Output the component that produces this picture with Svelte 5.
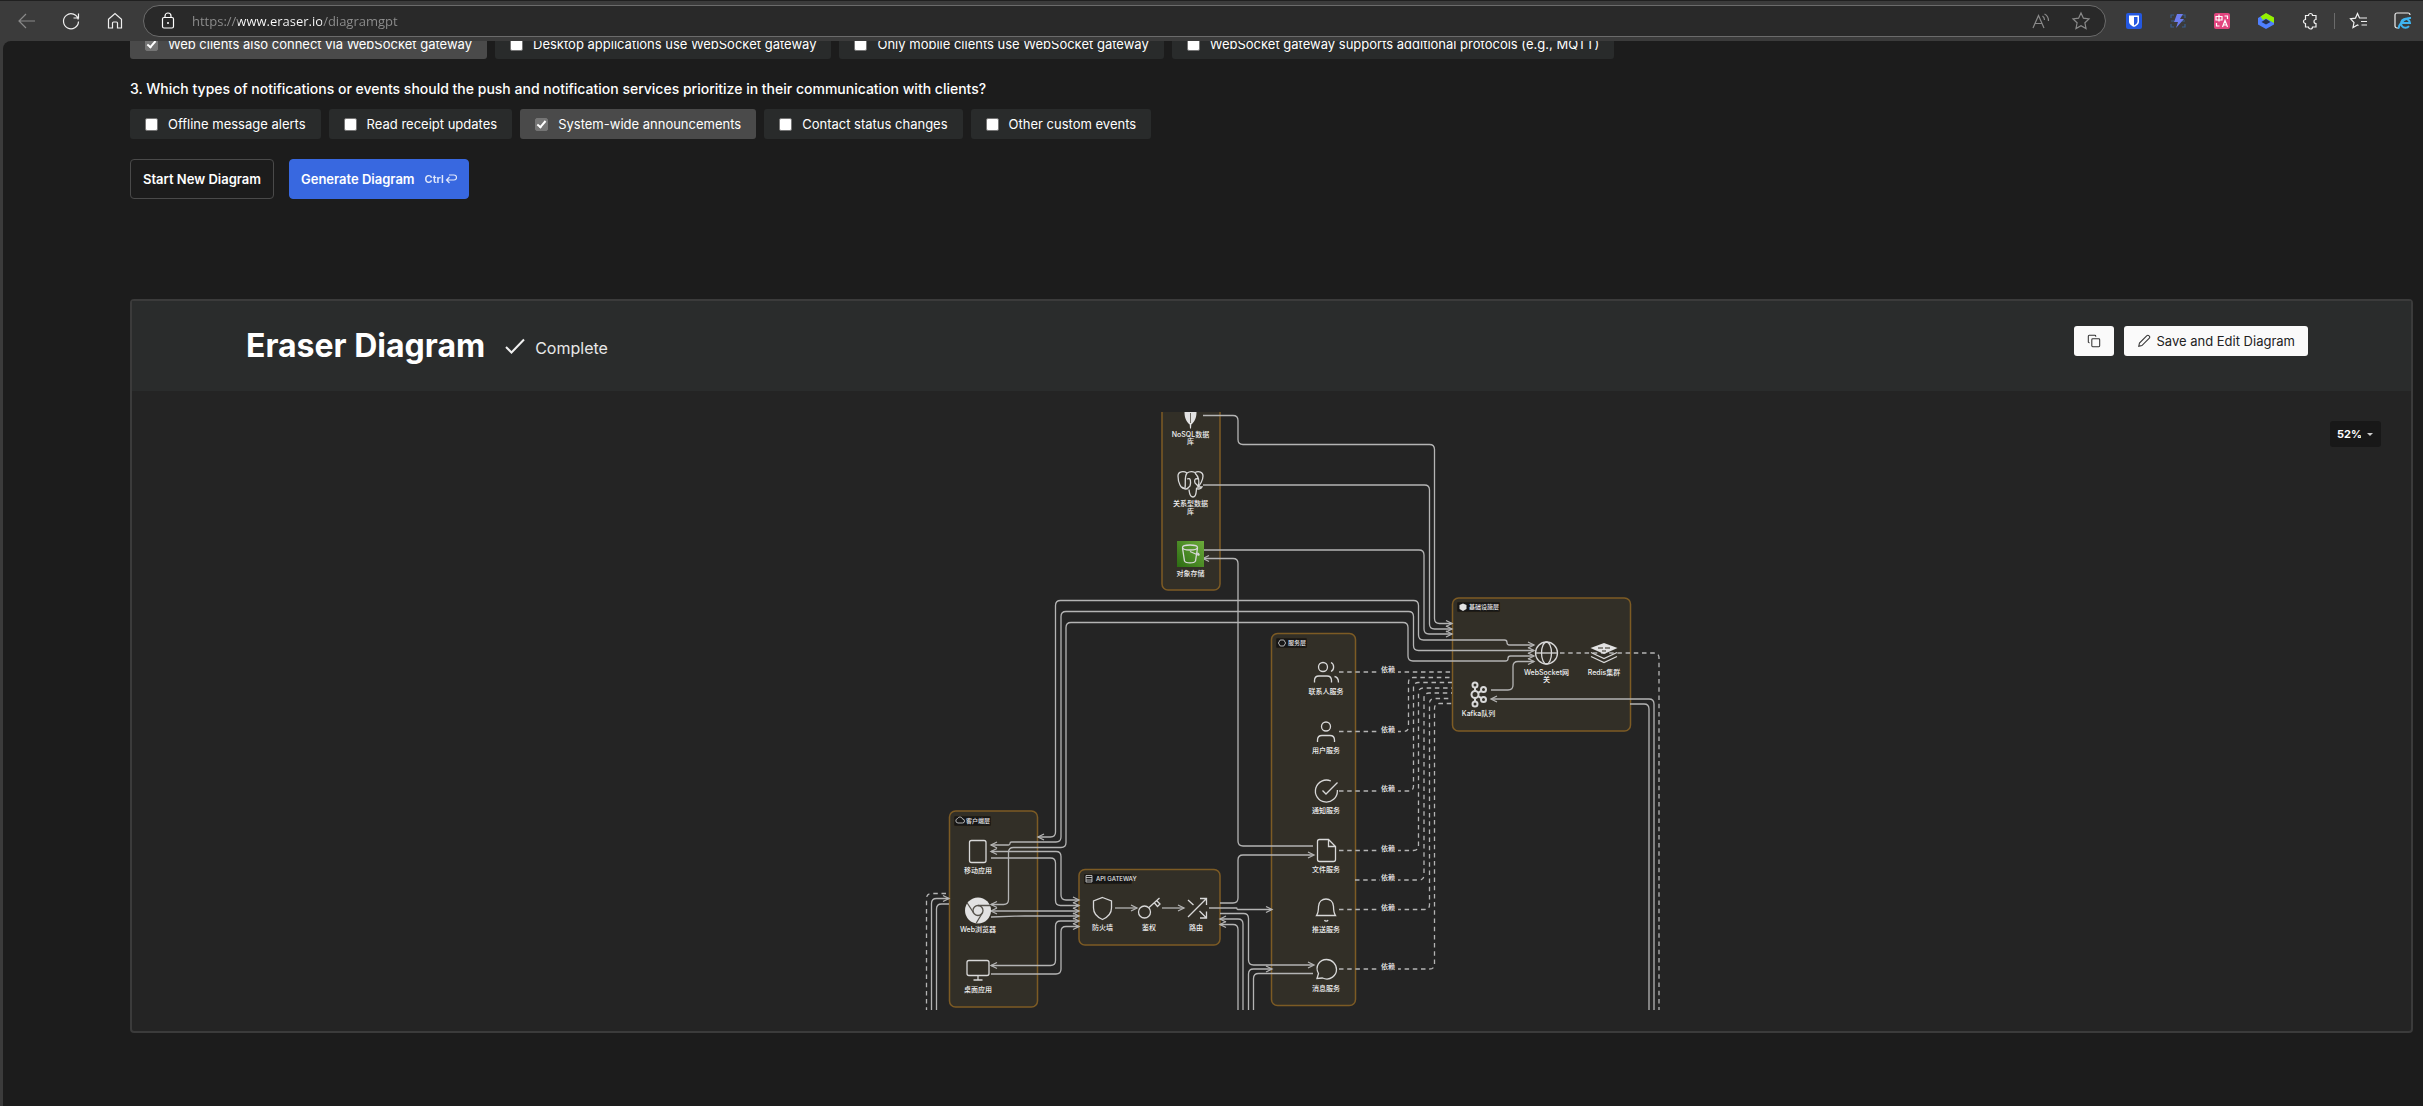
<script lang="ts">
	type Chip = { label: string; checked: boolean };

	let gatewayOptions = $state<Chip[]>([
		{ label: 'Web clients also connect via WebSocket gateway', checked: true },
		{ label: 'Desktop applications use WebSocket gateway', checked: false },
		{ label: 'Only mobile clients use WebSocket gateway', checked: false },
		{ label: 'WebSocket gateway supports additional protocols (e.g., MQTT)', checked: false }
	]);

	let eventOptions = $state<Chip[]>([
		{ label: 'Offline message alerts', checked: false },
		{ label: 'Read receipt updates', checked: false },
		{ label: 'System-wide announcements', checked: true },
		{ label: 'Contact status changes', checked: false },
		{ label: 'Other custom events', checked: false }
	]);

	let url = $state('https://www.eraser.io/diagramgpt');
	let zoom = $state('52%');

	const groups = [
		{ x: 1162, y: 380, w: 58, h: 210 },
		{ x: 1452.5, y: 598, w: 178, h: 133 },
		{ x: 1271.5, y: 633.5, w: 84, h: 372 },
		{ x: 949.5, y: 811, w: 88, h: 196 },
		{ x: 1079, y: 869.5, w: 141, h: 75.5 }
	];

	const tags = [
		{ x: 1457, y: 602, w: 43, text: '基础设施层' },
		{ x: 1276, y: 638, w: 31, text: '服务层' },
		{ x: 954, y: 816, w: 37, text: '客户端层' },
		{ x: 1084, y: 874, w: 48, text: 'API GATEWAY' }
	];

	// each edge is a list of corner points, drawn with rounded bends
	const edges = [
		[1203, 415.5, 1238, 415.5, 1238, 444.5, 1434.5, 444.5, 1434.5, 623.5, 1452, 623.5],
		[1203, 485, 1429.5, 485, 1429.5, 629, 1452, 629],
		[1203, 550, 1424, 550, 1424, 634, 1452, 634],
		[1313, 846, 1238, 846, 1238, 558.5, 1203, 558.5],
		[1038, 837, 1055.5, 837, 1055.5, 600.5, 1418.5, 600.5, 1418.5, 640, 1507, 640, 1507, 645, 1534, 645],
		[991, 845, 1010, 845, 1010, 842, 1061, 842, 1061, 611.5, 1413.5, 611.5, 1413.5, 650.5, 1534, 650.5],
		[991, 904.5, 1008.5, 904.5, 1008.5, 847.5, 1066, 847.5, 1066, 622.5, 1408, 622.5, 1408, 661, 1508, 661, 1508, 656, 1534, 656],
		[1491, 690, 1513, 690, 1513, 661.5, 1534, 661.5],
		[1492, 699, 1654, 699, 1654, 1012],
		[1630, 704, 1649, 704, 1649, 1012],
		[991, 851.5, 1061, 851.5, 1061, 900, 1079, 900],
		[991, 858, 1055.5, 858, 1055.5, 905.5, 1079, 905.5],
		[991, 911, 1079, 911],
		[991, 917, 1020, 916, 1079, 916],
		[991, 965.5, 1055.5, 965.5, 1055.5, 921, 1079, 921],
		[991, 974, 1061, 974, 1061, 926.5, 1079, 926.5],
		[1115, 908, 1137, 908],
		[1162, 908, 1184, 908],
		[1209, 908, 1237, 908, 1237, 909.5, 1271, 909.5],
		[1220, 903, 1238, 903, 1238, 855, 1313, 855],
		[1220, 913.5, 1248.5, 913.5, 1248.5, 965, 1313, 965],
		[1220, 919, 1243, 919, 1243, 1012],
		[1220, 924.5, 1238, 924.5, 1238, 1012],
		[1271, 969, 1248.5, 969, 1248.5, 1012],
		[1313, 973.5, 1253.5, 973.5, 1253.5, 1012],
		[949, 898.5, 931.5, 898.5, 931.5, 1012],
		[949, 904, 936.5, 904, 936.5, 1012]
	];

	const dashed = [
		[1339, 672, 1452, 672],
		[1339, 731.5, 1408.5, 731.5, 1408.5, 677.5, 1452, 677.5],
		[1339, 791, 1413.5, 791, 1413.5, 682.5, 1452, 682.5],
		[1339, 850.5, 1418.5, 850.5, 1418.5, 688, 1452, 688],
		[1355, 880, 1424, 880, 1424, 693, 1452, 693],
		[1339, 909.5, 1429.5, 909.5, 1429.5, 698.5, 1452, 698.5],
		[1339, 969, 1434.5, 969, 1434.5, 703.5, 1452, 703.5],
		[1560, 653, 1659, 653, 1659, 1012],
		[946, 893.5, 926.5, 893.5, 926.5, 1012]
	];

	const headsRight = [
		[1452, 623.5], [1452, 629], [1452, 634],
		[1534, 645], [1534, 650.5], [1534, 656], [1534, 661.5],
		[1079, 900], [1079, 905.5], [1079, 911], [1079, 916], [1079, 921], [1079, 926.5],
		[1137, 908], [1184, 908], [1272, 909.5], [1314, 855], [1314, 965], [1272, 969], [949, 898.5]
	];

	const headsLeft = [
		[1203, 558.5], [1038, 837], [991, 845], [991, 851.5], [991, 904.5],
		[991, 911], [991, 965.5], [1491, 699], [1220, 919], [1220, 924.5]
	];

	const labels = [
		{ x: 1190.5, y: 437, text: 'NoSQL数据' },
		{ x: 1190.5, y: 444, text: '库' },
		{ x: 1190.5, y: 506, text: '关系型数据' },
		{ x: 1190.5, y: 514, text: '库' },
		{ x: 1190.5, y: 576, text: '对象存储' },
		{ x: 1546.5, y: 675, text: 'WebSocket网' },
		{ x: 1546.5, y: 682, text: '关' },
		{ x: 1604, y: 675, text: 'Redis集群' },
		{ x: 1478.5, y: 716, text: 'Kafka队列' },
		{ x: 1326, y: 694, text: '联系人服务' },
		{ x: 1326, y: 753, text: '用户服务' },
		{ x: 1326, y: 813, text: '通知服务' },
		{ x: 1326, y: 872, text: '文件服务' },
		{ x: 1326, y: 932, text: '推送服务' },
		{ x: 1326, y: 991, text: '消息服务' },
		{ x: 978, y: 873, text: '移动应用' },
		{ x: 978, y: 932, text: 'Web浏览器' },
		{ x: 978, y: 992, text: '桌面应用' },
		{ x: 1102.5, y: 930, text: '防火墙' },
		{ x: 1149, y: 930, text: '鉴权' },
		{ x: 1196, y: 930, text: '路由' }
	];

	const dependsY = [672, 731.5, 791, 850.5, 880, 909.5, 969];

	function route(p: number[]) {
		let d = `M${p[0]} ${p[1]}`;
		for (let i = 2; i < p.length - 2; i += 2) {
			const dx0 = p[i] - p[i - 2];
			const dy0 = p[i + 1] - p[i - 1];
			const dx1 = p[i + 2] - p[i];
			const dy1 = p[i + 3] - p[i + 1];
			const l0 = Math.hypot(dx0, dy0);
			const l1 = Math.hypot(dx1, dy1);
			const r = Math.min(5, l0 / 2, l1 / 2);
			d += `L${p[i] - (dx0 / l0) * r} ${p[i + 1] - (dy0 / l0) * r}`;
			d += `Q${p[i]} ${p[i + 1]} ${p[i] + (dx1 / l1) * r} ${p[i + 1] + (dy1 / l1) * r}`;
		}
		return d + `L${p[p.length - 2]} ${p[p.length - 1]}`;
	}
</script>

{#snippet chips(options: Chip[])}
	<div class="chips">
		{#each options as option}
			<label class="chip" class:selected={option.checked}>
				<input type="checkbox" bind:checked={option.checked} />
				<span>{option.label}</span>
			</label>
		{/each}
	</div>
{/snippet}

<div class="browser">
	<header class="toolbar">
		<button class="tool dim" aria-label="Back">
			<svg viewBox="0 0 20 20"><path d="M18 10H2.500M9 3L2 10l7 7" /></svg>
		</button>
		<button class="tool" aria-label="Refresh">
			<svg viewBox="0 0 20 20"><path d="M17.300 8.500A7.500 7.500 0 1 0 17.500 10.500M17.500 2.500V7H12.500" /></svg>
		</button>
		<button class="tool" aria-label="Home">
			<svg viewBox="0 0 20 20"><path d="M3.500 8.300L10 2.500l6.500 5.800V17H12.500V12a1 1 0 0 0-1-1h-3a1 1 0 0 0-1 1v5H3.500z" /></svg>
		</button>
		<div class="address">
			<svg class="lock" viewBox="0 0 20 20">
				<rect x="4.500" y="6.500" width="11" height="10.500" rx="1.500" />
				<path d="M7 6.500V5a3 3 0 0 1 6 0v1.500" />
				<circle class="solid" cx="10" cy="12" r="1" />
			</svg>
			<input class="url" type="text" aria-label="Address" bind:value={url} />
			<button class="tool dim" aria-label="Read aloud">
				<svg viewBox="0 0 20 20"><path d="M2 17L7.500 4.500L13 17M4 12.500h7M11.500 5q2 1.500 2 4M13.500 3q4 2 4 7" /></svg>
			</button>
			<button class="tool dim" aria-label="Favorite this page">
				<svg viewBox="0 0 20 20"><path d="M10 2l2.400 5.200 5.600.700-4.100 3.900 1.100 5.700-5-2.800-5 2.800 1.100-5.700L2 7.900l5.600-.7z" /></svg>
			</button>
		</div>
		<div class="extensions">
			<button class="tool" aria-label="Password manager">
				<svg viewBox="0 0 20 20">
					<rect x="2" y="2" width="16" height="16" rx="2" fill="#2458e0" stroke="none" />
					<path d="M5 4.500h10v6c0 3-3 4.500-5 5.500-2-1-5-2.500-5-5.500z" fill="#fff" stroke="none" />
					<path d="M10 6h3.500v4.500c0 2-2 3-3.500 4z" fill="#2458e0" stroke="none" />
				</svg>
			</button>
			<button class="tool" aria-label="Page capture">
				<svg viewBox="0 0 20 20">
					<path d="M3 7V4h3M14 4h3v3M3 13v3h3M14 16h3v-3M3 10h3M14 10h3" stroke="#3a5f8f" />
					<path d="M9 3h6l-3 5h4l-8 9 2-6H6z" fill="#6c7cf0" stroke="none" />
				</svg>
			</button>
			<button class="tool" aria-label="Translate">
				<svg viewBox="0 0 20 20">
					<rect x="2" y="2" width="16" height="16" rx="2" fill="#e2457f" stroke="none" />
					<path d="M4 5.500h6v3.500H4zM7 3.500v7M12.500 5h3v3M4.500 12v3h3M10.500 16l2.500-6.500 2.500 6.500M11.500 14h3" stroke="#fff" />
				</svg>
			</button>
			<button class="tool" aria-label="Layers">
				<svg viewBox="0 0 20 20">
					<path d="M2 7l8-4.500L18 7v6.500L10 18l-8-4.500z" fill="#4f80ff" stroke="none" />
					<path d="M4.500 5.500L10 2l8 4.500V12l-8-4.500-3 1.500z" fill="#94f000" stroke="none" />
					<path d="M5.500 11L10 8l4.500 3-4.500 2.500z" fill="#26324f" stroke="none" />
				</svg>
			</button>
			<button class="tool" aria-label="Extensions">
				<svg viewBox="0 0 20 20"><path d="M5.500 4.500h3a2 2 0 0 1 4 0H16v4a2 2 0 0 0 0 4V16h-3.500a2 2 0 0 1-4 0h-3v-3.500a2 2 0 0 1 0-4z" /></svg>
			</button>
			<span class="divider"></span>
			<button class="tool" aria-label="Favorites">
				<svg viewBox="0 0 20 20"><path d="M9.500 14.500L8.500 14l-4.500 2.500 1-5L1.500 7.800l5-.7L8.500 2.500l2 4.500H18M12 10.500h6M12.500 14H18" /></svg>
			</button>
			<button class="tool" aria-label="Internet Explorer mode">
				<svg viewBox="0 0 20 20">
					<path d="M6 17H4a2 2 0 0 1-2-2V4a2 2 0 0 1 2-2h11a2 2 0 0 1 2 2" />
					<path d="M7.500 12h9.500a4.500 4.500 0 1 0-1 3.200M6 17.500c-1-3 5-11 12-10.500" stroke="#3fb4f0" stroke-width="2" />
				</svg>
			</button>
		</div>
	</header>

	<main class="page">
		<section class="questions">
			{@render chips(gatewayOptions)}
			<h2>3. Which types of notifications or events should the push and notification services prioritize in their communication with clients?</h2>
			{@render chips(eventOptions)}
			<div class="actions">
				<button class="btn">Start New Diagram</button>
				<button class="btn primary">
					Generate Diagram
					<span class="shortcut">
						Ctrl
						<svg viewBox="0 0 12 10"><path d="M4 1H9a2.500 2.500 0 0 1 0 5H1.500M4.500 3L1.500 6l3 3" /></svg>
					</span>
				</button>
			</div>
		</section>

		<section class="panel">
			<div class="panel-head">
				<h1>Eraser Diagram</h1>
				<svg class="tick" viewBox="0 0 20 16"><path d="M1 9l5.500 5.500L19 1.500" /></svg>
				<span class="status">Complete</span>
				<button class="light copy" aria-label="Copy">
					<svg viewBox="0 0 16 16"><rect x="5.500" y="5.500" width="9" height="9" rx="1" /><path d="M3 10H2.500a1 1 0 0 1-1-1V2.500a1 1 0 0 1 1-1H9a1 1 0 0 1 1 1V3" /></svg>
				</button>
				<button class="light save">
					<svg viewBox="0 0 16 16"><path d="M2 14l.8-3.600L11.300 1.900a1.500 1.500 0 0 1 2.200 0l.6.6a1.500 1.500 0 0 1 0 2.200L5.600 13.200z" /></svg>
					Save and Edit Diagram
				</button>
			</div>

			<div class="canvas">
				<svg class="diagram" viewBox="132 412 2279 598" role="img" aria-label="Architecture diagram">
					{#each groups as g}
						<rect class="group" x={g.x} y={g.y} width={g.w} height={g.h} rx="6" />
					{/each}

					{#each edges as e}
						<path class="edge" d={route(e)} />
					{/each}
					{#each dashed as e}
						<path class="edge dash" d={route(e)} />
					{/each}
					{#each headsRight as [x, y]}
						<path class="edge" d="M{x - 6} {y - 3}L{x} {y}L{x - 6} {y + 3}" />
					{/each}
					{#each headsLeft as [x, y]}
						<path class="edge" d="M{x + 6} {y - 3}L{x} {y}L{x + 6} {y + 3}" />
					{/each}

					{#each tags as t}
						<rect class="tag" x={t.x} y={t.y} width={t.w} height="10" rx="1" />
						<text class="tag-text" x={t.x + 12} y={t.y + 7}>{t.text}</text>
					{/each}

					{#each dependsY as y}
						<rect class="gap" x="1380" y={y - 5} width="18" height="8" />
						<text class="label" x="1388" y={y}>依赖</text>
					{/each}

					{#each labels as l}
						<text class="label" x={l.x} y={l.y}>{l.text}</text>
					{/each}

					<!-- tag icons -->
					<g class="icon thin">
						<path class="solid" d="M1459.500 605l3.500-1.500 3.500 1.500v4l-3.500 2-3.500-2z" />
						<path d="M1280.200 640h3.600l1.800 3-1.800 3h-3.600l-1.800-3z" />
						<path d="M957.500 818.500a2.300 2.300 0 0 0 .5 4.500h4.500a2 2 0 0 0 0-4c-.5-2.500-4-2.500-5-.5z" />
						<path d="M1086 875.500h6v6.500h-6zM1086 877.500h6M1086 880h6" />
					</g>

					<!-- MongoDB -->
					<path class="solid" d="M1184.500 412h12c0 6-2 10-5.200 12.500l-.3 4h-1l-.3-4c-3.200-2.500-5.200-6.500-5.200-12.500z" />
					<path class="seam" d="M1190.500 413v10" />

					<!-- PostgreSQL -->
					<g class="icon">
						<path d="M1185 488c-4 2-7-6-7-12 0-5 6-5 9-3 3-2 6-1.500 8-.5 4-2 8 0 8 3.500 0 4-3 9-5 11h4c-1 2-4 2.500-5.500 1.500-.5 4 0 8.500-3.500 8.500-3.500 0-3.500-4-4-7.500" />
						<path d="M1187 473c-3 4-1 10-2 15M1187 479c4-2 4 3 3 7l-3 3M1195 473c4 4 5 8 3 14M1198 479c-3-1-4 1-3 4l3 3" />
						<path d="M1182 487c3 3 5 2 6 1" />
					</g>

					<!-- S3 -->
					<defs>
						<linearGradient id="bucket" x1="0" y1="1" x2="1" y2="0">
							<stop offset="0" stop-color="#2c6c12" />
							<stop offset="1" stop-color="#6cab3a" />
						</linearGradient>
					</defs>
					<rect x="1177" y="541" width="27" height="26" fill="url(#bucket)" />
					<g class="icon">
						<ellipse cx="1190" cy="547.500" rx="7.500" ry="2.500" />
						<path d="M1182.500 548l2 13c1.500 2.500 9.500 2.500 11 0l2-13" />
						<path d="M1190 551.500l8 3.500c2 .500 1-1.500-.8-2" />
					</g>

					<!-- globe -->
					<g class="icon">
						<circle cx="1546.500" cy="653" r="11" />
						<ellipse cx="1546.500" cy="653" rx="5" ry="11" />
						<path d="M1535.500 653h22" />
					</g>

					<!-- Redis -->
					<g class="icon">
						<path class="solid" d="M1590.500 648l13.500-5 13.500 5-13.500 6z" />
						<path d="M1591 652.500l13 6 13-6M1591 656.500l13 6 13-6" />
						<path class="seam" d="M1598 648h5M1605 648h5M1602 651h4" />
					</g>

					<!-- Kafka -->
					<g class="icon heavy">
						<circle cx="1475" cy="685" r="2.500" />
						<circle cx="1475" cy="694.500" r="3.500" />
						<circle cx="1475" cy="704" r="2.500" />
						<circle cx="1483.500" cy="689.500" r="2.500" />
						<circle cx="1483.500" cy="699.500" r="2.500" />
						<path d="M1475 688v3M1475 698v3M1478.200 692.800l3-2M1478.200 696.200l3 2" />
					</g>

					<!-- services -->
					<g class="icon">
						<circle cx="1323" cy="667" r="4.500" />
						<path d="M1314.500 682.500v-2c0-3 2-4.500 4.500-4.500h8c2.500 0 4.500 1.500 4.500 4.500v2M1331 662.500c3.500 1.500 3.500 7.500 0 9M1334.500 676.500c2.500.5 4 2 4 6" />
						<circle cx="1326" cy="726.500" r="4.500" />
						<path d="M1317.500 742v-2c0-3 2-4.500 4.500-4.500h8c2.500 0 4.500 1.500 4.500 4.500v2" />
						<path d="M1337.400 790v1a11 11 0 1 1-6.500-10M1337.500 782.500l-11.500 11.500-3.500-3.500" />
						<path d="M1328.500 839.500h-9a2 2 0 0 0-2 2v18a2 2 0 0 0 2 2h14a2 2 0 0 0 2-2v-13zl0 7h7" />
						<path d="M1316.500 915.500c2-3 2-5 2-9 0-10 15-10 15 0 0 4 0 6 2 9zM1324.500 920c.5 1.500 3 1.500 3.500 0" />
						<path d="M1317 978.500l1.500-5c-4-7 1-14 8-14 5.500 0 10 4.500 10 10s-6 12-14 8.500z" />
					</g>

					<!-- clients -->
					<g class="icon">
						<rect x="969.500" y="840.500" width="16.500" height="22" rx="2" />
						<rect x="967" y="960.500" width="22" height="15" rx="2" />
						<path d="M978 975.500v4.500M973.500 980h9" />
					</g>
					<circle class="solid" cx="978" cy="910.500" r="13" />
					<circle class="chrome" cx="978" cy="910.500" r="5" />
					<path class="chrome" d="M978 905.500h12M973.700 913l-6.500-10M982.300 913l-6 10" />

					<!-- gateway -->
					<g class="icon">
						<path d="M1102.500 897.500l9 3.500v7c0 6-4.500 9.500-9 11.500-4.500-2-9-5.500-9-11.500v-7z" />
						<circle cx="1144.500" cy="912" r="6" />
						<path d="M1149 907.500l10.500-9.500M1154.500 903l3 3.500 2.500-2.500-3-3" />
						<path d="M1188 917l18-18M1200 898.500h6.500v6.500M1188 900l5.500 5M1199.500 911l6.500 6.500M1200 918h6.500v-6.500" />
					</g>
				</svg>

				<label class="zoom">
					<select aria-label="Zoom level" bind:value={zoom}>
						<option>52%</option>
						<option>100%</option>
					</select>
					<svg viewBox="0 0 8 5"><path d="M1 1h6L4 4z" /></svg>
				</label>
			</div>
		</section>
	</main>
</div>

<style>
	:global(body) {
		background: #3b3b3b;
	}

	.browser {
		min-height: 100vh;
		display: flex;
		flex-direction: column;
		overflow: hidden;
		font-family: Inter, 'Noto Sans CJK SC', sans-serif;
		font-size: 13px;
		color: #fff;
	}

	button,
	input,
	select {
		font: inherit;
		color: inherit;
		margin: 0;
	}

	.toolbar {
		display: flex;
		align-items: center;
		height: 40px;
		flex: none;
		padding: 0 10px 0 17px;
		gap: 24px;
		border-top: 1px solid #202020;
	}

	.tool {
		width: 20px;
		height: 20px;
		padding: 0;
		border: none;
		background: none;
		flex: none;
		color: #f0f0f0;
	}

	.tool.dim {
		color: #8a8a8a;
	}

	.tool svg {
		display: block;
		width: 20px;
		height: 20px;
		fill: none;
		stroke: currentColor;
		stroke-width: 1.2;
	}

	.address {
		flex: 1;
		display: flex;
		align-items: center;
		box-sizing: border-box;
		height: 32px;
		margin: 0 -6px;
		padding: 0 14px;
		gap: 20px;
		border: 1px solid #6b6b6b;
		border-radius: 16px;
		background: #292929;
	}

	.lock {
		width: 20px;
		height: 20px;
		flex: none;
		margin-right: -6px;
		fill: none;
		stroke: #fff;
		stroke-width: 1.2;
	}

	.lock .solid {
		fill: #fff;
		stroke: none;
	}

	/* the domain is picked out in white */
	.url {
		flex: 1;
		min-width: 0;
		padding: 0;
		border: none;
		font-family: 'Open Sans', sans-serif;
		background: linear-gradient(to right, #8f8f8f 46px, #fff 46px, #fff 130px, #8f8f8f 130px);
		background-clip: text;
		-webkit-text-fill-color: transparent;
	}

	.extensions {
		display: flex;
		align-items: center;
		gap: 24px;
	}

	.divider {
		width: 1px;
		height: 16px;
		margin: 0 -10px;
		background: #6b6b6b;
	}

	.page {
		flex: 1;
		margin-left: 3px;
		padding: 0 10px 74px 127px;
		border-top-left-radius: 8px;
		background: #1c1c1c;
		overflow: hidden;
	}

	/* the page is scrolled a little way down */
	.questions {
		margin-top: -12px;
	}

	.chips {
		display: flex;
		gap: 8px;
	}

	.chip {
		display: flex;
		align-items: center;
		box-sizing: border-box;
		height: 30px;
		padding: 0 15px;
		gap: 10px;
		border-radius: 3px;
		background: #292b2b;
		white-space: nowrap;
	}

	.chip.selected {
		background: #4a4a4a;
	}

	.chip input {
		appearance: none;
		width: 13px;
		height: 13px;
		border: 1px solid #767676;
		border-radius: 2px;
		background: #fff;
	}

	.chip input:checked {
		border-color: #757575;
		background: #757575;
	}

	.chip input:checked::after {
		content: '';
		display: block;
		width: 3px;
		height: 7px;
		margin: 0 0 0 3px;
		border: solid #fff;
		border-width: 0 2px 2px 0;
		transform: rotate(40deg);
	}

	h2 {
		margin: 20px 0 10px;
		font-size: 14px;
		font-weight: 500;
		line-height: 20px;
	}

	.actions {
		display: flex;
		gap: 15px;
		margin-top: 20px;
	}

	.btn {
		display: flex;
		align-items: center;
		box-sizing: border-box;
		height: 40px;
		padding: 0 12px;
		border: 1px solid #4a4a4a;
		border-radius: 4px;
		background: none;
		font-weight: 600;
	}

	.btn.primary {
		padding: 0 11px;
		border-color: #3868e0;
		background: #3868e0;
	}

	.shortcut {
		display: flex;
		align-items: center;
		gap: 1px;
		margin-left: 10px;
		font-size: 11px;
		opacity: 0.85;
	}

	.shortcut svg {
		width: 12px;
		height: 10px;
		fill: none;
		stroke: #fff;
		stroke-width: 1.2;
	}

	.panel {
		margin-top: 100px;
		border: 2px solid #3b3b3b;
		border-radius: 4px;
		background: #242424;
	}

	.panel-head {
		display: flex;
		align-items: center;
		height: 90px;
		padding: 0 103px 0 114px;
		background: #2a2c2c;
	}

	h1 {
		margin: 0;
		font-size: 32px;
		font-weight: 700;
		line-height: 40px;
	}

	.tick {
		width: 20px;
		height: 16px;
		margin: 0 10px 0 20px;
		fill: none;
		stroke: #f0f0f0;
		stroke-width: 2;
	}

	.status {
		flex: 1;
		padding-top: 4px;
		font-size: 16px;
		color: #e8e8e8;
	}

	.light {
		display: flex;
		align-items: center;
		justify-content: center;
		box-sizing: border-box;
		height: 30px;
		margin-bottom: 10px;
		padding: 0 13px;
		gap: 5px;
		border: none;
		border-radius: 3px;
		background: #fafafa;
		color: #222;
	}

	.light svg {
		width: 14px;
		height: 14px;
		fill: none;
		stroke: #333;
		stroke-width: 1.2;
	}

	.copy {
		width: 40px;
		margin-right: 10px;
	}

	.canvas {
		position: relative;
		padding: 21px 0;
	}

	.diagram {
		display: block;
		width: 100%;
	}

	.group {
		fill: #322f27;
		stroke: #7d5b24;
		stroke-width: 1.5;
	}

	.edge {
		fill: none;
		stroke: #b4b4b4;
		stroke-width: 1.3;
	}

	.dash {
		stroke-dasharray: 4.5 3.7;
	}

	.tag {
		fill: #161616;
		stroke: #3a2e1a;
		stroke-width: 0.5;
	}

	.tag-text {
		font-size: 6px;
		font-weight: 500;
		fill: #e8e8e8;
	}

	.label {
		font-size: 7px;
		font-weight: 500;
		text-anchor: middle;
		fill: #f0f0f0;
	}

	.gap {
		fill: #242424;
	}

	.icon {
		fill: none;
		stroke: #d8d8d8;
		stroke-width: 1.3;
	}

	.thin {
		stroke-width: 0.8;
	}

	.heavy {
		stroke-width: 2;
	}

	.diagram .solid {
		fill: #e2e2e2;
		stroke: none;
	}

	.seam {
		stroke: #6a675f;
	}

	.chrome {
		fill: #e2e2e2;
		stroke: #55524b;
		stroke-width: 1.3;
	}

	.zoom {
		position: absolute;
		top: 30px;
		right: 30px;
		display: flex;
		align-items: center;
		height: 26px;
		padding: 0 7px;
		gap: 5px;
		border-radius: 3px;
		background: #181818;
	}

	.zoom select {
		appearance: none;
		width: 24px;
		padding: 0;
		border: none;
		background: none;
		font-size: 11px;
		font-weight: 700;
	}

	.zoom svg {
		width: 8px;
		height: 5px;
		fill: #ccc;
	}
</style>
